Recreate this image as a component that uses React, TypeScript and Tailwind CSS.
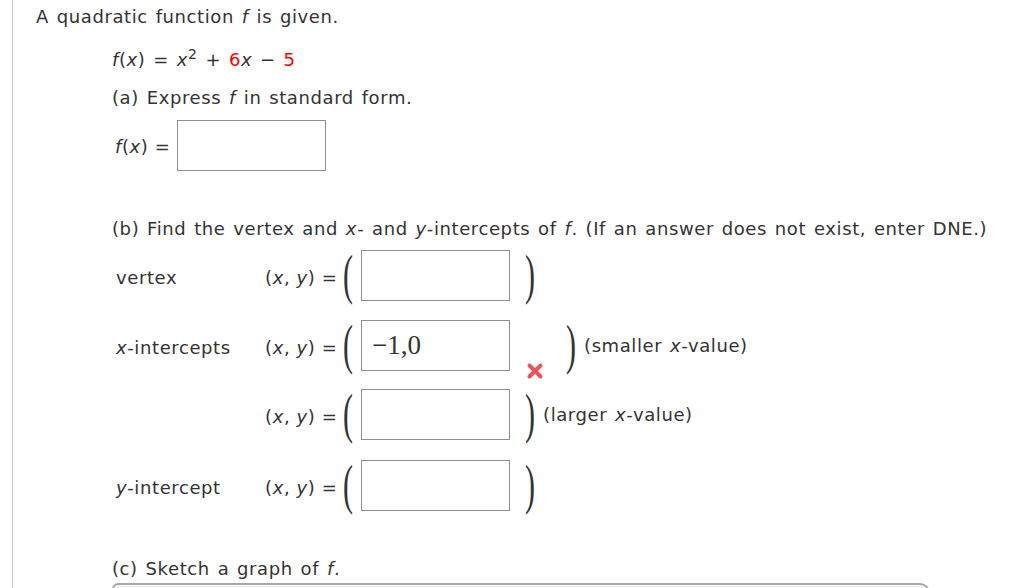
import React from "react";

const sans = "font-['DejaVu_Sans',Verdana,sans-serif]";

function Box({ value }: { value?: string }) {
  return (
    <div className="flex h-[51px] w-[149px] shrink-0 items-center border border-[#8f8f8f] bg-white pl-[10px]">
      {value && (
        <span className="font-['Liberation_Serif',serif] text-[27px] leading-none tracking-normal text-[#333]">
          {value}
        </span>
      )}
    </div>
  );
}

function Paren({ right }: { right?: boolean }) {
  return (
    <span className="inline-block scale-y-[1.8] font-['Liberation_Serif',serif] text-[30px] leading-none tracking-normal text-[#333]">
      {right ? ")" : "("}
    </span>
  );
}

function XY() {
  return (
    <span className="w-[76px] shrink-0 whitespace-nowrap pt-[5px] [word-spacing:0px]">
      (<i>x</i>, <i>y</i>) =
    </span>
  );
}

function WrongMark() {
  return (
    <svg width="18" height="18" viewBox="0 0 18 18" className="mt-[42px] shrink-0">
      <path
        d="M3.5 3.5 L14.5 14.5 M14.5 3.5 L3.5 14.5"
        stroke="#f0525b"
        strokeWidth="4"
        strokeLinecap="round"
      />
    </svg>
  );
}

function PointRow({
  label,
  value,
  note,
  wrong,
}: {
  label?: React.ReactNode;
  value?: string;
  note?: "smaller" | "larger";
  wrong?: boolean;
}) {
  return (
    <div className="flex h-[51px] items-center">
      <span className="w-[153px] shrink-0 pl-[4px] pt-[5px]">{label}</span>
      <XY />
      <span className="ml-[2px] mr-[8px]">
        <Paren />
      </span>
      <Box value={value} />
      {wrong && (
        <span className="ml-[16px] flex h-[51px] items-start">
          <WrongMark />
        </span>
      )}
      <span className={wrong ? "ml-[22px]" : "ml-[15px]"}>
        <Paren right />
      </span>
      {note && (
        <span className="ml-[8px] whitespace-nowrap">
          ({note} <i>x</i>-value)
        </span>
      )}
    </div>
  );
}

export default function App() {
  return (
    <div className={"h-[588px] overflow-hidden bg-white text-[#333] " + sans}>
      <div className="ml-3 h-[588px] border-l border-[#c8c8c8] pl-[23px] pt-[5px] text-[18px] leading-[24px] tracking-[0.6px] [word-spacing:1.5px]">
        <p>
          A quadratic function <i>f</i> is given.
        </p>
        <div className="pl-[76px]">
          <p className="mt-[19px]">
            <i>f</i>(<i>x</i>) = <i>x</i>
            <sup className="text-[14px]">2</sup> + <span className="text-[#f00]">6</span>
            <i>x</i> − <span className="text-[#f00]">5</span>
          </p>
          <p className="mt-[14px]">
            (a) Express <i>f</i> in standard form.
          </p>
          <div className="mt-[10px] flex items-center">
            <span className="w-[65px] shrink-0 whitespace-nowrap pl-[3px] pt-[3px] [word-spacing:0px]">
              <i>f</i>(<i>x</i>) =
            </span>
            <Box />
          </div>
          <p className="mt-[46px] whitespace-nowrap">
            (b) Find the vertex and <i>x</i>- and <i>y</i>-intercepts of <i>f</i>. (If an answer
            does not exist, enter DNE.)
          </p>
          <div className="mt-[9px]">
            <PointRow label="vertex" />
          </div>
          <div className="mt-[19px]">
            <PointRow
              label={
                <>
                  <i>x</i>-intercepts
                </>
              }
              value="−1,0"
              wrong
              note="smaller"
            />
          </div>
          <div className="mt-[18px]">
            <PointRow note="larger" />
          </div>
          <div className="mt-[20px]">
            <PointRow
              label={
                <>
                  <i>y</i>-intercept
                </>
              }
            />
          </div>
          <p className="mt-[46px]">
            (c) Sketch a graph of <i>f</i>.
          </p>
          <div className="mt-[2px] h-[40px] w-[818px] rounded-tl-[6px] rounded-tr-[10px] border-2 border-[#a8a8a8] bg-[#f3f3f3]" />
        </div>
      </div>
    </div>
  );
}
